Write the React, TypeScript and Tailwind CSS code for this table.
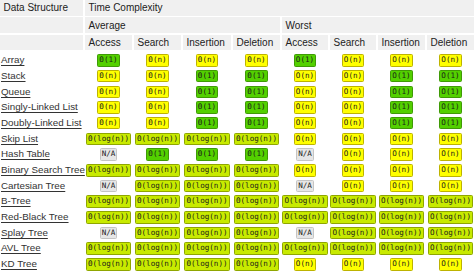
import React from "react";

type K = "1" | "n" | "log" | "na";

const rows: { name: string; avg: K[]; worst: K[] }[] = [
  { name: "Array", avg: ["1", "n", "n", "n"], worst: ["1", "n", "n", "n"] },
  { name: "Stack", avg: ["n", "n", "1", "1"], worst: ["n", "n", "1", "1"] },
  { name: "Queue", avg: ["n", "n", "1", "1"], worst: ["n", "n", "1", "1"] },
  { name: "Singly-Linked List", avg: ["n", "n", "1", "1"], worst: ["n", "n", "1", "1"] },
  { name: "Doubly-Linked List", avg: ["n", "n", "1", "1"], worst: ["n", "n", "1", "1"] },
  { name: "Skip List", avg: ["log", "log", "log", "log"], worst: ["n", "n", "n", "n"] },
  { name: "Hash Table", avg: ["na", "1", "1", "1"], worst: ["na", "n", "n", "n"] },
  { name: "Binary Search Tree", avg: ["log", "log", "log", "log"], worst: ["n", "n", "n", "n"] },
  { name: "Cartesian Tree", avg: ["na", "log", "log", "log"], worst: ["na", "n", "n", "n"] },
  { name: "B-Tree", avg: ["log", "log", "log", "log"], worst: ["log", "log", "log", "log"] },
  { name: "Red-Black Tree", avg: ["log", "log", "log", "log"], worst: ["log", "log", "log", "log"] },
  { name: "Splay Tree", avg: ["na", "log", "log", "log"], worst: ["na", "log", "log", "log"] },
  { name: "AVL Tree", avg: ["log", "log", "log", "log"], worst: ["log", "log", "log", "log"] },
  { name: "KD Tree", avg: ["log", "log", "log", "log"], worst: ["n", "n", "n", "n"] },
];

const cls: Record<K, string> = {
  "1": "bg-[#53d000] border-[#3f9a06]",
  n: "bg-[#ffff00] border-[#bdb300]",
  log: "bg-[#c8ea00] border-[#8fa600]",
  na: "bg-[#e6e6e6] border-[#c4c4c4]",
};

function Badge({ k, p }: { k: K; p: string }) {
  const txt = k === "na" ? "N/A" : k === "1" ? `${p}(1)` : k === "n" ? `${p}(n)` : `${p}(log(n))`;
  return (
    <span
      className={`inline-block border rounded-[1.5px] px-[1px] text-[7.6px] leading-[10.5px] text-[#1a1a1a] ${cls[k]}`}
      style={{ fontFamily: '"DejaVu Sans Mono", monospace' }}
    >
      {txt}
    </span>
  );
}

const cols = "grid grid-cols-[83px_47px_47px_48px_47px_46px_46px_47px_47px] gap-x-[2px]";
const hcell = "bg-[#f0f0f0] h-[15.7px] flex items-center pl-[3.5px] whitespace-nowrap overflow-hidden";

export default function App() {
  const subs = ["Access", "Search", "Insertion", "Deletion"];
  return (
    <div
      className="w-[474px] h-[271px] overflow-hidden bg-white text-[#222]"
      style={{ fontFamily: '"Liberation Sans", Arial, sans-serif' }}
    >
      <div className={`${cols} gap-y-[1.7px] text-[10px]`}>
        <div className={hcell}>Data Structure</div>
        <div className={`${hcell} col-span-8`}>Time Complexity</div>
        <div className={hcell}></div>
        <div className={`${hcell} col-span-4`}>Average</div>
        <div className={`${hcell} col-span-4`}>Worst</div>
        <div className={hcell}></div>
        {subs.concat(subs).map((s, i) => (
          <div key={i} className={hcell}>
            {s}
          </div>
        ))}
      </div>
      <div className={`${cols} mt-[2.2px]`}>
        {rows.map((r) => (
          <React.Fragment key={r.name}>
            <div className="h-[15.7px] flex items-center pl-[1px] whitespace-nowrap text-[9.8px] text-[#333] underline underline-offset-[1.5px]">
              {r.name}
            </div>
            {r.avg.map((k, i) => (
              <div key={"a" + i} className="h-[15.7px] flex items-center justify-center">
                <Badge k={k} p="Θ" />
              </div>
            ))}
            {r.worst.map((k, i) => (
              <div key={"w" + i} className="h-[15.7px] flex items-center justify-center">
                <Badge k={k} p="O" />
              </div>
            ))}
          </React.Fragment>
        ))}
      </div>
    </div>
  );
}
